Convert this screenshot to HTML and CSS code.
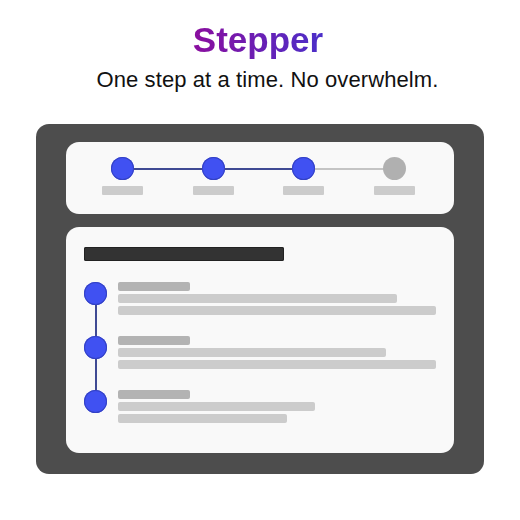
FILE: index.html
```html
<!doctype html>
<html>
  <head>
    <title>Stepper</title>
    <link rel="stylesheet" href="styles.css">
  </head>
  <body>
    <div class="hero">
      <h1 class="title">Stepper</h1>
      <p class="subtitle">One step at a time. No overwhelm.</p>
    </div>

    <div class="device">
      <div class="card steps-card">
        <div class="steps">
          <div class="step done">
            <span class="dot"></span>
            <span class="label"></span>
          </div>
          <div class="step done">
            <span class="dot"></span>
            <span class="label"></span>
          </div>
          <div class="step current">
            <span class="dot"></span>
            <span class="label"></span>
          </div>
          <div class="step">
            <span class="dot"></span>
            <span class="label"></span>
          </div>
        </div>
      </div>

      <div class="card content-card">
        <div class="heading-bar"></div>
        <div class="timeline">
          <div class="item">
            <span class="dot"></span>
            <div class="lines">
              <span class="line title-line"></span>
              <span class="line" style="width: 279px"></span>
              <span class="line" style="width: 318px"></span>
            </div>
          </div>
          <div class="item">
            <span class="dot"></span>
            <div class="lines">
              <span class="line title-line"></span>
              <span class="line" style="width: 268px"></span>
              <span class="line" style="width: 318px"></span>
            </div>
          </div>
          <div class="item">
            <span class="dot"></span>
            <div class="lines">
              <span class="line title-line"></span>
              <span class="line" style="width: 197px"></span>
              <span class="line" style="width: 169px"></span>
            </div>
          </div>
        </div>
      </div>
    </div>
  </body>
</html>
```

FILE: styles.css
```css
:root {
  --frame: #4d4d4d;
  --card: #f9f9f9;
  --accent: #4051f2;
  --accent-edge: #3442c4;
  --link: #404a94;
  --idle: #b0b0b0;
  --idle-line: #c4c4c4;
  --bar: #cccccc;
  --bar-strong: #b3b3b3;
  --ink: #333333;
}

body {
  margin: 0;
  background: #ffffff;
  font-family: 'Liberation Sans', Arial, sans-serif;
  color: #111111;
}

.hero {
  text-align: center;
  padding-top: 18px;
}

.title {
  margin: 0 4px 0 0;
  font-size: 35px;
  font-weight: 600;
  line-height: 44px;
  background: linear-gradient(90deg, #8a0e9e, #4b2fc9);
  -webkit-background-clip: text;
  background-clip: text;
  color: transparent;
  display: inline-block;
}

.subtitle {
  margin: 5px 0 0;
  padding-left: 15px;
  font-size: 22px;
  line-height: 26px;
  letter-spacing: 0.1px;
  color: #111111;
}

.device {
  margin: 31px 36px 0;
  width: 448px;
  height: 350px;
  box-sizing: border-box;
  background: var(--frame);
  border-radius: 13px;
  padding: 18px 30px 0;
  display: flex;
  flex-direction: column;
  gap: 13px;
}

.card {
  background: var(--card);
  border-radius: 13px;
}

.steps-card {
  height: 72px;
  padding: 15px 0 0;
  box-sizing: border-box;
}

.steps {
  display: flex;
  margin: 0 14px 0 11px;
}

.step {
  flex: 1;
  display: flex;
  flex-direction: column;
  align-items: center;
  gap: 6px;
  position: relative;
}

/* connector from this step to the next one */
.step::after {
  content: '';
  position: absolute;
  top: 11px;
  left: 50%;
  width: 100%;
  height: 1.5px;
  background: var(--link);
}

.step.current::after {
  background: var(--idle-line);
  height: 2px;
}

.step:last-child::after {
  display: none;
}

.step .dot {
  width: 23px;
  height: 23px;
  border-radius: 50%;
  background: var(--idle);
  position: relative;
  z-index: 1;
}

.step.done .dot,
.step.current .dot {
  background: var(--accent);
  box-shadow: 0 0 0 1px var(--accent-edge) inset;
}

.step .label {
  width: 41px;
  height: 9px;
  border-radius: 1px;
  background: var(--bar);
}

.content-card {
  height: 226px;
  padding: 20px 18px 0;
  box-sizing: border-box;
}

.heading-bar {
  width: 200px;
  height: 14px;
  background: var(--ink);
  border-radius: 2px;
  box-shadow: 0 0 0 1px #222 inset;
}

.timeline {
  margin-top: 21px;
  display: flex;
  flex-direction: column;
  gap: 21px;
  position: relative;
}

/* vertical rail through the dots */
.timeline::before {
  content: '';
  position: absolute;
  left: 11px;
  top: 12px;
  height: 109px;
  width: 1.5px;
  background: var(--link);
}

.item {
  display: flex;
  align-items: flex-start;
  gap: 11px;
}

.item .dot {
  flex: none;
  width: 23px;
  height: 23px;
  border-radius: 50%;
  background: var(--accent);
  box-shadow: 0 0 0 1px var(--accent-edge) inset;
  position: relative;
  z-index: 1;
}

.lines {
  display: flex;
  flex-direction: column;
  gap: 3px;
}

.line {
  display: block;
  height: 9px;
  border-radius: 2px;
  background: var(--bar);
}

.line.title-line {
  width: 72px;
  background: var(--bar-strong);
}
```
